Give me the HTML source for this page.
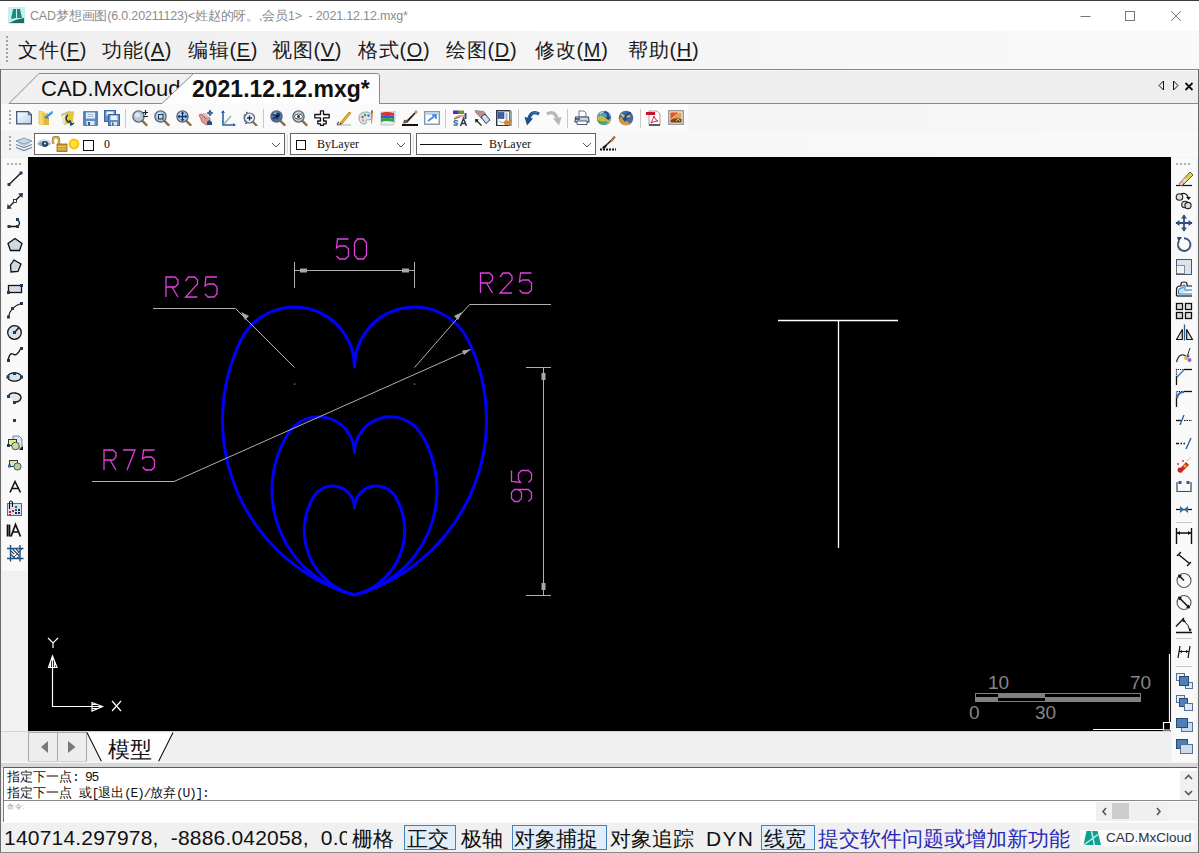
<!DOCTYPE html>
<html><head><meta charset="utf-8">
<style>
*{box-sizing:border-box;margin:0;padding:0}
html,body{width:1199px;height:853px;overflow:hidden;background:#f0f0f0;font-family:"Liberation Sans",sans-serif;position:relative}
.a{position:absolute}
#title{left:0;top:0;width:1199px;height:31px;background:#fff;border-top:1px solid #3a3a3a}
#title .t{left:30px;top:7px;font-size:12.5px;color:#8c8c8c;white-space:nowrap;letter-spacing:-0.17px}
#menu{left:0;top:31px;width:1199px;height:38px;background:linear-gradient(to right,#eeeeee,#f4f4f4 40%,#f9f9f9)}
#menu span{position:absolute;top:6px;font-size:20px;color:#1a1a1a;white-space:nowrap;letter-spacing:0.7px}
#menu u{text-decoration:underline;text-underline-offset:2px}
#tabs{left:0;top:69px;width:1199px;height:35px}
#tb1{left:1px;top:104px;width:1197px;height:27px;background:linear-gradient(to right,#f9f9f9 0,#fbfbfb 687px,#f5f5f5 687px,#f7f7f7)}
#tb2{left:1px;top:131px;width:1197px;height:26px;background:linear-gradient(to right,#f3f3f3,#f7f7f7 50%,#f9f9f9)}
#draw{left:28px;top:157px;width:1143px;height:574px;background:#000}
#ltb{left:1px;top:157px;width:27px;height:574px}
#rtb{left:1171px;top:157px;width:27px;height:606px}
#lborder{left:0;top:69px;width:1px;height:784px;background:#6a6a6a}
#rborder{left:1198px;top:69px;width:1px;height:784px;background:#6a6a6a}
#mtabs{left:1px;top:731px;width:1170px;height:32px}
#cmd{left:3px;top:767px;width:1193px;height:55px;background:#fff;border-left:1px solid #7a7a7a}
.cl{font-size:13px;color:#111;white-space:nowrap;line-height:15px}
.m{font-family:"Liberation Mono",monospace;font-size:13px;letter-spacing:-1.3px}
#status{left:1px;top:822px;width:1197px;height:31px;background:#f0f0f0}
.st{position:absolute;top:5px;font-size:21px;color:#111;white-space:nowrap;line-height:24px}
.box{position:absolute;top:3px;height:25px;background:#e1eefa;border:1px solid #3f84bd}
</style></head><body>
<div id="title" class="a">
 <svg class="a" style="left:8px;top:6px" width="17" height="17" viewBox="0 0 17 17"><rect x="0" y="0" width="17" height="17" fill="#c8f0ee"/><path d="M3 12 L5 2 L8 2 L8 11 Z M9 11 L9 2 L12 2 L14 11Z" fill="#1f8a80"/><path d="M1 16 Q8 12 16 11 L16 16Z" fill="#1b6e66"/></svg>
 <div class="a t">CAD梦想画图(6.0.20211123)&lt;姓赵的呀。,会员1&gt;&nbsp; - 2021.12.12.mxg*</div>
 <svg class="a" style="left:1075px;top:5px" width="115" height="20"><path d="M5.5 10.5h10" stroke="#777" stroke-width="1"/><rect x="50.5" y="5.5" width="9" height="9" fill="none" stroke="#777"/><path d="M96 5l10 10M106 5l-10 10" stroke="#777" stroke-width="1"/></svg>
</div>
<div id="menu" class="a">
 <div class="a" style="left:6px;top:5px;width:2px;height:27px;background:repeating-linear-gradient(#a4a4a4 0 2px,transparent 2px 4px)"></div>
 <span style="left:18px">文件(<u>F</u>)</span>
 <span style="left:102px">功能(<u>A</u>)</span>
 <span style="left:188px">编辑(<u>E</u>)</span>
 <span style="left:272px">视图(<u>V</u>)</span>
 <span style="left:358px">格式(<u>O</u>)</span>
 <span style="left:446px">绘图(<u>D</u>)</span>
 <span style="left:535px">修改(<u>M</u>)</span>
 <span style="left:628px">帮助(<u>H</u>)</span>
</div>
<div id="tabs" class="a">
 <svg class="a" style="left:0;top:0" width="1199" height="35" viewBox="0 69 1199 35">
  <rect x="0" y="69" width="1199" height="35" fill="#eeeeee"/>
  <path d="M0 69.5H1199" stroke="#8a8a8a"/>
  <path d="M0 70.5H1199" stroke="#f7f7f7"/>
  <path d="M9 103.5L39 73.5H196V103.5Z" fill="#f0f0f0" stroke="#8a8a8a"/>
  <path d="M9 103.5H1199" stroke="#8a8a8a"/>
  <path d="M1163.5 81V90L1159 85.5Z" fill="none" stroke="#111" stroke-width="1"/>
  <path d="M1173.5 81V90L1178 85.5Z" fill="none" stroke="#111" stroke-width="1"/>
  <path d="M1185.5 83L1192.5 90M1192.5 83L1185.5 90" stroke="#111" stroke-width="1.8"/>
 </svg>
 <div class="a" style="left:41px;top:7px;font-size:22px;color:#111;white-space:nowrap">CAD.MxCloud</div>
 <svg class="a" style="left:0;top:0" width="1199" height="35" viewBox="0 69 1199 35">
  <path d="M161.5 104L193.5 73.5H377Q379.5 73.5 379.5 76V103.5H1199" fill="#fdfdfd" stroke="#8a8a8a"/>
  <path d="M162.5 103.5H379" stroke="#fdfdfd"/>
 </svg>
 <div class="a" style="left:192px;top:7px;font-size:23px;font-weight:bold;color:#111;white-space:nowrap">2021.12.12.mxg*</div>
</div>
<div id="tb1" class="a">
<div class="a" style="left:8px;top:6px;width:2px;height:16px;background:repeating-linear-gradient(#a8a8a8 0 2px,transparent 2px 4px)"></div>
<svg class="a" style="left:15px;top:7px" width="16" height="16" viewBox="0 0 16 16"><defs><linearGradient id="gn" x1="0" y1="0" x2="1" y2="1"><stop offset="0" stop-color="#ffffff"/><stop offset="1" stop-color="#b5d3e8"/></linearGradient></defs><path d="M0.7 0.7H12.3L15.5 3.9V12.9H0.7Z" fill="url(#gn)" stroke="#3e5673" stroke-width="1.25"/><path d="M12.3 0.7V3.9H15.5" fill="none" stroke="#3e5673" stroke-width="0.9"/></svg>
<svg class="a" style="left:37px;top:6px" width="16" height="16" viewBox="0 0 16 16"><path d="M1 1L6 2V15L1 14Z" fill="#f7dc6a" stroke="#d9b440" stroke-width="0.6"/><path d="M4 3H10V15H5Z" fill="#efc94c"/><path d="M6 4L11 8V15H6Z" fill="#e4b73a"/><path d="M8 6L14 1L15 3L10 7L11 9L6 8Z" fill="#2f89d8"/><path d="M11 3L15 1" stroke="#7fd0f0" stroke-width="1"/></svg>
<svg class="a" style="left:59px;top:6px" width="16" height="16" viewBox="0 0 16 16"><path d="M1 4L9 1L14 2L12 13L4 15Z" fill="#b8b070" opacity="0.8"/><path d="M5 5L14 1L13 12L6 14Z" fill="#e8c63a"/><path d="M2 6L5 4L5 14L2 14Z" fill="#ece6c8"/><path d="M8 5Q4 8 8 12L10 11L11 15L14 13" fill="none" stroke="#1a2a3a" stroke-width="1.4"/><path d="M10 11L13 14L10 15Z" fill="#1e4f7a"/></svg>
<svg class="a" style="left:82px;top:7px" width="16" height="16" viewBox="0 0 16 16"><rect x="0.75" y="0.75" width="13.5" height="13.5" fill="#5f8fc6" stroke="#3a6699" stroke-width="1"/><rect x="3" y="1.5" width="9" height="6" fill="#e8f2fb"/><path d="M4.5 3.5H10.5M4.5 5.5H10.5" stroke="#8aa8c8" stroke-width="0.8"/><rect x="3.5" y="10" width="8" height="4" fill="#dfe9f3"/><rect x="5" y="11" width="2" height="3" fill="#2f5a8f"/></svg>
<svg class="a" style="left:103px;top:6px" width="16" height="16" viewBox="0 0 16 16"><rect x="0.5" y="0.5" width="11" height="11" fill="#5f8fc6" stroke="#3a6699" stroke-width="1"/><rect x="2.5" y="1.5" width="7" height="4" fill="#e8f2fb"/><rect x="4.5" y="4.5" width="11" height="11" fill="#5f8fc6" stroke="#3a6699" stroke-width="1"/><rect x="6.5" y="5.5" width="7" height="4.5" fill="#e8f2fb"/><rect x="7" y="12" width="6" height="3.5" fill="#dfe9f3"/><rect x="8" y="12.5" width="1.5" height="3" fill="#2f5a8f"/></svg>
<svg class="a" style="left:131px;top:6px" width="16" height="16" viewBox="0 0 16 16"><defs></defs><path d="M9.5 10L14.5 15" stroke="#8a6a40" stroke-width="2.4" stroke-linecap="round"/><circle cx="6.5" cy="6.5" r="5.6" fill="#b9c8d6" stroke="#55657a" stroke-width="1.3"/><circle cx="5.5" cy="5" r="2.5" fill="#e6eef5" opacity="0.8"/><path d="M11 2.5H16M13.5 0V5M11 6.5H16" stroke="#222" stroke-width="1.1"/></svg>
<svg class="a" style="left:153px;top:6px" width="16" height="16" viewBox="0 0 16 16"><defs></defs><path d="M9.5 10L14.5 15" stroke="#8a6a40" stroke-width="2.4" stroke-linecap="round"/><circle cx="6.5" cy="6.5" r="5.6" fill="#b9c8d6" stroke="#55657a" stroke-width="1.3"/><circle cx="5.5" cy="5" r="2.5" fill="#e6eef5" opacity="0.8"/><rect x="4.5" y="4.5" width="4.5" height="4.5" fill="none" stroke="#1d3f6e" stroke-width="1.1"/></svg>
<svg class="a" style="left:175px;top:6px" width="16" height="16" viewBox="0 0 16 16"><defs></defs><path d="M9.5 10L14.5 15" stroke="#8a6a40" stroke-width="2.4" stroke-linecap="round"/><circle cx="6.5" cy="6.5" r="5.6" fill="#b9c8d6" stroke="#55657a" stroke-width="1.3"/><circle cx="5.5" cy="5" r="2.5" fill="#e6eef5" opacity="0.8"/><path d="M6.5 2.5V10.5M2.5 6.5H10.5" stroke="#0f3a78" stroke-width="1.4"/><path d="M6.5 1.5L8.5 3.8H4.5ZM6.5 11.5L8.5 9.2H4.5ZM1.5 6.5L3.8 4.5V8.5ZM11.5 6.5L9.2 4.5V8.5Z" fill="#0f3a78"/></svg>
<svg class="a" style="left:197px;top:6px" width="16" height="16" viewBox="0 0 16 16"><path d="M1 5Q3 3 5 5L9 9Q10 6 12 8L12 13L8 15L4 12Z" fill="#d79a9a" stroke="#b46a6a" stroke-width="0.8"/><path d="M3 4L8 9M5 3L9 8M7 3L10 7" stroke="#b46a6a" stroke-width="0.7"/><path d="M11 10L14 12V15H9V12Z" fill="#1f4f85"/><path d="M12 0V6M9 3H15" stroke="#1f4f85" stroke-width="1.2"/><path d="M12 0L10.5 1.8H13.5ZM9 3L10.8 1.5V4.5ZM15 3L13.2 1.5V4.5ZM12 6L10.5 4.2H13.5Z" fill="#1f4f85"/></svg>
<svg class="a" style="left:219px;top:6px" width="16" height="16" viewBox="0 0 16 16"><path d="M3 1V15H15" fill="none" stroke="#2a62a8" stroke-width="1.6"/><path d="M3 0L1 3H5ZM16 15L13 13V17Z" fill="#2a62a8"/><path d="M4 14L11 6" stroke="#9aa9b8" stroke-width="1.3"/></svg>
<svg class="a" style="left:241px;top:6px" width="16" height="16" viewBox="0 0 16 16"><path d="M10 11L14.5 15.5" stroke="#8a6a40" stroke-width="2.2" stroke-linecap="round"/><circle cx="7.5" cy="8" r="5" fill="#e7eef6" stroke="#55657a" stroke-width="1.2"/><path d="M7.5 5.5V10.5M5 8H10" stroke="#1d3050" stroke-width="1.3"/><path d="M2.5 4Q1 8 3 12" fill="none" stroke="#6a7a8a" stroke-width="1"/><path d="M4 1.5L6 2.5L4 4Z M3.5 12L5.5 14L3 14Z" fill="#556"/></svg>
<svg class="a" style="left:269px;top:6px" width="16" height="16" viewBox="0 0 16 16"><defs></defs><path d="M9.5 10L14.5 15" stroke="#8a6a40" stroke-width="2.4" stroke-linecap="round"/><circle cx="6.5" cy="6.5" r="5.6" fill="#4d6f9a" stroke="#55657a" stroke-width="1.3"/><circle cx="5.5" cy="5" r="2.5" fill="#e6eef5" opacity="0.8"/><path d="M3 4L8 9M3 9L7 4H9V7" stroke="#1d3f6e" stroke-width="2"/></svg>
<svg class="a" style="left:291px;top:6px" width="16" height="16" viewBox="0 0 16 16"><defs></defs><path d="M9.5 10L14.5 15" stroke="#8a6a40" stroke-width="2.4" stroke-linecap="round"/><circle cx="6.5" cy="6.5" r="5.6" fill="#c5ccd4" stroke="#55657a" stroke-width="1.3"/><circle cx="5.5" cy="5" r="2.5" fill="#e6eef5" opacity="0.8"/><ellipse cx="6.5" cy="6.5" rx="4" ry="2.5" fill="#fff" stroke="#333" stroke-width="0.8"/><circle cx="6.5" cy="6.5" r="1.5" fill="#333"/></svg>
<svg class="a" style="left:313px;top:6px" width="16" height="16" viewBox="0 0 16 16"><path d="M6.5 0.8H9.5V4.5H15.2V7.8H9.5V11H12.2V13.8H9.5V15.5H6.5V13.8H3.8V11H6.5V7.8H0.8V4.5H6.5Z" fill="#fff" stroke="#111" stroke-width="1.3" stroke-linejoin="round"/></svg>
<svg class="a" style="left:335px;top:6px" width="16" height="16" viewBox="0 0 16 16"><path d="M1 14Q0 16 3 15L15 15" fill="none" stroke="#9a9a9a" stroke-width="0.8"/><path d="M2 15Q1 12 3 12" fill="none" stroke="#222" stroke-width="1"/><path d="M4 13L13 2L15 3L6 14Z" fill="#e8b52a" stroke="#a67710" stroke-width="0.7"/><path d="M4 13L6 14L3 15Z" fill="#333"/></svg>
<svg class="a" style="left:357px;top:6px" width="16" height="16" viewBox="0 0 16 16"><path d="M8 2Q1 2 1 8Q1 14 7 14Q9 14 8 11Q8 9 11 10Q14 10 14 7Q14 2 8 2Z" fill="#d8e6f2" stroke="#7a8fa6" stroke-width="0.8"/><circle cx="4.5" cy="7" r="1.2" fill="#e04040"/><circle cx="7" cy="5" r="1.2" fill="#3aa03a"/><circle cx="10.5" cy="5.5" r="1.2" fill="#3a6ad0"/><circle cx="5" cy="10.5" r="1.2" fill="#e0b020"/><path d="M13 1L14 0L15 1L14 13L13 14Z" fill="#e09030"/><path d="M13.3 0.5H14.7V3H13.3Z" fill="#8a5a2a"/></svg>
<svg class="a" style="left:379px;top:6px" width="16" height="16" viewBox="0 0 16 16"><path d="M1 2H13L15 1V12L13 15H1Z" fill="#ececec" stroke="#9aa" stroke-width="0.6"/><path d="M1 3Q6 1 14 3V6Q6 4 1 6Z" fill="#e03030"/><path d="M1 6Q6 4 14 6V9Q6 7 1 9Z" fill="#3060d0"/><path d="M1 9Q6 7 14 9V12Q6 10 1 12Z" fill="#30a040"/></svg>
<svg class="a" style="left:401px;top:6px" width="16" height="16" viewBox="0 0 16 16"><path d="M0 15H16" stroke="#111" stroke-width="2"/><path d="M3 12L14 1L15 2L5 13Z" fill="#222"/><path d="M2 10Q4 9 6 11L4 13Q2 14 1 13Z" fill="#7a5a3a"/><path d="M12 2L14 0L16 2L14 4Z" fill="#c9a070"/></svg>
<svg class="a" style="left:423px;top:6px" width="16" height="16" viewBox="0 0 16 16"><rect x="0.75" y="1.75" width="14.5" height="12.5" fill="#fff" stroke="#7e8da0" stroke-width="1.3"/><rect x="1.5" y="2.5" width="13" height="2.5" fill="#c6d6e6"/><path d="M4 11L12 5M8 5H12V9" fill="none" stroke="#3a8ad8" stroke-width="1.6"/></svg>
<svg class="a" style="left:451px;top:6px" width="16" height="16" viewBox="0 0 16 16"><defs><linearGradient id="rb"><stop offset="0" stop-color="#e0008a"/><stop offset=".3" stop-color="#3a20d0"/><stop offset=".6" stop-color="#20c020"/><stop offset="1" stop-color="#f05020"/></linearGradient></defs><rect x="1" y="0.5" width="11" height="3.5" fill="url(#rb)"/><path d="M2 8Q6 4 12 5L12 7Q7 6 3 10Z" fill="#e0a0a0"/><path d="M2 9Q5 8 8 7" stroke="#6a8a4a" stroke-width="1.2" fill="none"/><rect x="12.5" y="3" width="2" height="6" fill="#3a4a6a"/><path d="M6 11Q2 10 2 12Q2 13 4 13Q6 13.5 5 15H1.5" fill="none" stroke="#4a6aa0" stroke-width="1.3"/><path d="M8.5 16L11.5 8.5L14.5 16M9.5 13.5H13.5" fill="none" stroke="#2a3a5a" stroke-width="1.5"/></svg>
<svg class="a" style="left:473px;top:6px" width="16" height="16" viewBox="0 0 16 16"><path d="M1 0.5L10 1.5L13 6L8 9L2 3Z" fill="#b89088" stroke="#8a6a60" stroke-width="0.6"/><path d="M7 7L11 4L16 10L12 13.5Z" fill="#d0e2f0" stroke="#2a3a5a" stroke-width="1"/><path d="M7.5 15.5L1.5 9.5" stroke="#222" stroke-width="1.2"/><path d="M1 9L5 9.5L1.5 13Z" fill="#222"/></svg>
<svg class="a" style="left:495px;top:6px" width="16" height="16" viewBox="0 0 16 16"><rect x="0.75" y="0.75" width="13" height="15" fill="#fff" stroke="#2a2f3a" stroke-width="1.4"/><rect x="2" y="2.5" width="6" height="6" fill="#3a62a8" stroke="#24407a" stroke-width="0.6"/><rect x="9.5" y="2.5" width="2" height="9" fill="#a8b4c0"/><rect x="13.5" y="1" width="2.5" height="15" fill="#9aa2aa"/><path d="M7 12Q10 9 13 11L16 8.5L16 11L14 13Q13 15.5 9 15Z" fill="#d8862a"/><path d="M3 11L7 13" stroke="#888" stroke-width="0.8"/></svg>
<svg class="a" style="left:523px;top:6px" width="16" height="16" viewBox="0 0 16 16"><path d="M15 4Q8 0 5 8" fill="none" stroke="#1e4f8e" stroke-width="3.2"/><path d="M0.5 7L9 8.5L3 15.5Z" fill="#1e4f8e"/><path d="M14 3Q9 1.5 7 5" fill="none" stroke="#5a8ad0" stroke-width="0.8"/></svg>
<svg class="a" style="left:545px;top:6px" width="16" height="16" viewBox="0 0 16 16"><path d="M1 4Q8 0 11 8" fill="none" stroke="#b4b8bd" stroke-width="3.2"/><path d="M15.5 7L7 8.5L13 15.5Z" fill="#b4b8bd"/></svg>
<svg class="a" style="left:573px;top:6px" width="16" height="16" viewBox="0 0 16 16"><path d="M5 1H10L12 3V7H5Z" fill="#fff" stroke="#556" stroke-width="0.8"/><path d="M1.5 7H14.5L15 12H1Z" fill="#c8d4e2" stroke="#3a4a6a" stroke-width="1.1"/><path d="M3 11H13V14.5H3Z" fill="#fff" stroke="#3a4a6a" stroke-width="0.9"/><path d="M1.5 9H6" stroke="#1a3a6a" stroke-width="1.4"/></svg>
<svg class="a" style="left:595px;top:6px" width="16" height="16" viewBox="0 0 16 16"><circle cx="8" cy="8" r="7.3" fill="#5a9ab8"/><path d="M1 8Q4 4 8 7T15 9L13 13Q8 15 3 12Z" fill="#c8b848"/><path d="M2 11Q6 14 11 12" stroke="#4aa04a" stroke-width="2" fill="none"/><path d="M4 4Q6 1 10 2" stroke="#e8e0a0" stroke-width="1.2" fill="none"/><path d="M8 2Q13 2 12 8" fill="none" stroke="#1e4f8e" stroke-width="2.2"/><path d="M9 7L12.5 10.5L15 6.5Z" fill="#1e4f8e"/></svg>
<svg class="a" style="left:617px;top:6px" width="16" height="16" viewBox="0 0 16 16"><circle cx="8" cy="8" r="7.3" fill="#4a6a98"/><path d="M1 9Q4 5 7 9T13 14L8 15.5Q3 14 1 11Z" fill="#d89838"/><path d="M3 4Q6 8 12 6" stroke="#e8d070" stroke-width="1.4" fill="none"/><path d="M13 3Q7 3 7 10" fill="none" stroke="#1e4f8e" stroke-width="2.2"/><path d="M4 8L7 12L10 8Z" fill="#1e4f8e"/></svg>
<svg class="a" style="left:645px;top:6px" width="16" height="16" viewBox="0 0 16 16"><path d="M3 1H11L14 4V15H3Z" fill="#fff" stroke="#888" stroke-width="0.8"/><path d="M3 15H14" stroke="#111" stroke-width="1.2"/><rect x="0" y="2" width="9" height="3" fill="#c8102e"/><path d="M5 13Q7 9 8 6Q9 10 12 11Q8 11 5 13Z" fill="none" stroke="#c8102e" stroke-width="0.9"/></svg>
<svg class="a" style="left:667px;top:6px" width="16" height="16" viewBox="0 0 16 16"><rect x="0.75" y="0.75" width="14.5" height="13.5" fill="#f4f4f4" stroke="#8a949e" stroke-width="1.3"/><rect x="2.5" y="2.5" width="11" height="10" fill="#e8a050"/><path d="M2.5 2.5H10Q5 6 2.5 9Z" fill="#e05030"/><path d="M2.5 10Q7 7 13.5 9V12.5H2.5Z" fill="#6a4a2a"/><path d="M8 11L10 9L12 11" stroke="#f0e0a0" stroke-width="0.8" fill="none"/></svg>
<div class="a" style="left:124px;top:5px;width:1px;height:19px;background:#c8c8c8"></div>
<div class="a" style="left:262px;top:5px;width:1px;height:19px;background:#c8c8c8"></div>
<div class="a" style="left:444px;top:5px;width:1px;height:19px;background:#c8c8c8"></div>
<div class="a" style="left:517px;top:5px;width:1px;height:19px;background:#c8c8c8"></div>
<div class="a" style="left:566px;top:5px;width:1px;height:19px;background:#c8c8c8"></div>
<div class="a" style="left:639px;top:5px;width:1px;height:19px;background:#c8c8c8"></div>
</div>
<div id="tb2" class="a">
<div class="a" style="left:8px;top:5px;width:2px;height:16px;background:repeating-linear-gradient(#a8a8a8 0 2px,transparent 2px 4px)"></div>
<svg class="a" style="left:14px;top:6px" width="18" height="15" viewBox="0 0 18 15"><path d="M1 4L9 1L17 4L9 7Z" fill="#c4d8ec" stroke="#6f89a8" stroke-width="0.8"/><path d="M1 7.5L9 10.5L17 7.5" fill="none" stroke="#6f89a8" stroke-width="1.2"/><path d="M1 10.5L9 13.5L17 10.5" fill="none" stroke="#6f89a8" stroke-width="1.2"/><path d="M3 5.5L9 8.5L15 5.5" fill="none" stroke="#9fb6cf" stroke-width="1"/></svg>
<div class="a" style="left:33px;top:2px;width:251px;height:22px;background:#fff;border:1px solid #646464"></div>
<svg class="a" style="left:36px;top:8px" width="14" height="10" viewBox="0 0 14 10"><path d="M0 5Q7 -2 14 5Q7 10 0 5Z" fill="#8aa2bc"/><path d="M0 3Q7 -1 14 3" stroke="#d0dce8" stroke-width="1.5" fill="none"/><circle cx="8" cy="5" r="3" fill="#2a3f5a"/><circle cx="8" cy="4.5" r="1" fill="#fff"/></svg>
<svg class="a" style="left:50px;top:5px" width="17" height="16" viewBox="0 0 17 16"><path d="M2 8V4Q2 1 5 1Q8 1 8 4V8" fill="none" stroke="#9a7a20" stroke-width="2.4"/><path d="M2 8V4Q2 1 5 1Q8 1 8 4V8" fill="none" stroke="#e8cf60" stroke-width="1"/><rect x="6" y="8" width="10" height="7.5" fill="#c89a28" stroke="#8a6a10" stroke-width="0.8"/><path d="M6.5 10.5H15.5M6.5 13H15.5" stroke="#f0d070" stroke-width="0.9"/></svg>
<svg class="a" style="left:67px;top:7px" width="12" height="12" viewBox="0 0 12 12"><circle cx="6" cy="6" r="5.4" fill="#f8c400"/><circle cx="6" cy="6" r="3.4" fill="#ffe040"/></svg>
<div class="a" style="left:82px;top:9px;width:11px;height:11px;border:1px solid #111;background:#fff"></div>
<div class="a" style="left:103px;top:6px;font-family:'Liberation Serif',serif;font-size:12px;color:#111">0</div>
<svg class="a" style="left:270px;top:11px" width="10" height="6" viewBox="0 0 10 6"><path d="M1 1L5 5L9 1" fill="none" stroke="#555" stroke-width="1"/></svg>
<div class="a" style="left:286px;top:4px;width:2px;height:18px;background:#d8d8d8;border-right:1px solid #fff"></div>
<div class="a" style="left:289px;top:2px;width:121px;height:22px;background:#fff;border:1px solid #646464"></div>
<div class="a" style="left:295px;top:9px;width:10px;height:10px;border:1px solid #111;background:#fff"></div>
<div class="a" style="left:316px;top:6px;font-family:'Liberation Serif',serif;font-size:12px;color:#111">ByLayer</div>
<svg class="a" style="left:395px;top:11px" width="10" height="6" viewBox="0 0 10 6"><path d="M1 1L5 5L9 1" fill="none" stroke="#555" stroke-width="1"/></svg>
<div class="a" style="left:412px;top:4px;width:2px;height:18px;background:#d8d8d8;border-right:1px solid #fff"></div>
<div class="a" style="left:415px;top:2px;width:180px;height:22px;background:#fff;border:1px solid #646464"></div>
<div class="a" style="left:419px;top:13px;width:62px;height:1px;background:#111"></div>
<div class="a" style="left:488px;top:6px;font-family:'Liberation Serif',serif;font-size:12px;color:#111">ByLayer</div>
<svg class="a" style="left:581px;top:11px" width="10" height="6" viewBox="0 0 10 6"><path d="M1 1L5 5L9 1" fill="none" stroke="#555" stroke-width="1"/></svg>
<svg class="a" style="left:598px;top:5px" width="18" height="15" viewBox="0 0 18 15"><path d="M1 13.5H17" stroke="#111" stroke-width="2" stroke-dasharray="2 1"/><path d="M4 12L15 2" stroke="#222" stroke-width="1.6"/><path d="M12 5L16 0.5" stroke="#a87040" stroke-width="2.2"/><path d="M3 12.5Q5 8 8 9.5L6 12.5Z" fill="#111"/></svg>
</div>
<div id="ltb" class="a">
<svg class="a" style="left:-1px;top:0" width="28" height="574" viewBox="0 157 28 574">
<rect x="0" y="157" width="28" height="574" fill="#f1f1f1"/>
<rect x="2" y="158" width="25" height="413" fill="#f9f9f9"/>
<g fill="#b0b0b0"><rect x="7" y="163" width="2" height="2"/><rect x="11" y="163" width="2" height="2"/><rect x="15" y="163" width="2" height="2"/><rect x="19" y="163" width="2" height="2"/></g>
<g stroke="#111" stroke-width="1.3" fill="none">
<path d="M9 184.5L21 173"/>
<path d="M8 208L22 194"/>
<path d="M9 226.5H17.5M17.5 219.5Q21.5 223 17.5 226.5"/>
<path d="M15 238.5L22 243.5L19.5 250.5H10.5L8 243.5Z" fill="#cdd9e5"/>
<path d="M14 260L21 264L18 271.5L11 272L10.5 265Z" fill="#cdd9e5"/>
<rect x="8.5" y="285.5" width="13" height="7" fill="#d5dde6"/>
<path d="M8.5 317Q10 307 21 303.5"/>
<circle cx="14.5" cy="332.5" r="6.8" fill="#d8e2ec"/><path d="M14.5 332.5L19 327.5"/>
<path d="M8 360Q10 352 13 354Q17 357 21 348"/>
<ellipse cx="14.5" cy="377" rx="6.8" ry="4.2" fill="#d8e2ec"/>
<path d="M8.5 396Q10 392.5 15 393Q21.5 394 21 398Q20 402 15 402" fill="#dde5ee"/>
<path d="M10 492.5L15 481.5L20.5 492.5M11.8 488.5H18.5" stroke-width="1.6"/>
<path d="M7.5 536.5V524.5M9.5 536.5V524.5M11 536.5L15.5 524.5L20.5 536.5M12.8 532H18.3" stroke-width="1.7"/>
</g>
<g fill="#1d3c5c">
<rect x="7.5" y="183" width="3" height="3"/><rect x="19.5" y="171.5" width="3" height="3"/>
<path d="M7 209L7.5 204L12 208.5Z M23 193L22.5 198L18 193.5Z"/>
<rect x="7.5" y="225" width="3" height="3"/><rect x="16" y="225" width="3" height="3"/><rect x="16" y="218" width="3" height="3"/>
<rect x="7" y="291" width="3" height="3"/><rect x="20" y="284" width="3" height="3"/>
<rect x="7" y="315.5" width="3" height="3"/><rect x="11" y="307" width="3" height="3"/><rect x="20" y="302" width="3" height="3"/>
<rect x="13" y="331" width="3" height="3"/>
<rect x="7" y="359" width="3" height="3"/><rect x="20" y="347" width="3" height="3"/>
<rect x="13" y="372" width="3" height="3"/><rect x="6.5" y="375.5" width="3" height="3"/><rect x="20" y="375.5" width="3" height="3"/>
<rect x="7" y="395" width="3" height="3"/><rect x="13" y="401" width="3" height="3"/>
<rect x="13" y="419" width="3" height="3"/>
</g>
<path d="M14 208.5L22 201.5L21 197L14 204" fill="none"/>
<rect x="13.5" y="199.5" width="3" height="3" fill="#fff" stroke="#111" stroke-width="0.8"/>
<!-- block -->
<path d="M13 436H19L22 439V448H13Z" fill="#dbe6f0" stroke="#5a6a7a" stroke-width="0.8"/>
<rect x="8.5" y="439.5" width="8" height="6" fill="#e8e890" stroke="#1d3c5c" stroke-width="1"/>
<circle cx="15.5" cy="446" r="3.8" fill="#c8d8a8" stroke="#3a4a3a" stroke-width="0.9"/>
<rect x="7" y="444" width="3" height="3" fill="#1d3c5c"/>
<path d="M23 446V450H19Z" fill="#111"/>
<rect x="9.5" y="460.5" width="8" height="6" fill="#e8e890" stroke="#1d3c5c" stroke-width="1"/>
<circle cx="17.5" cy="466.5" r="3.6" fill="#b8cca0" stroke="#3a4a3a" stroke-width="0.9"/>
<rect x="8" y="464.5" width="3" height="3" fill="#2f6ab0"/>
<!-- table -->
<rect x="7.5" y="503.5" width="14" height="12" fill="#d8e0f0" stroke="#5a6a8a" stroke-width="1"/>
<g fill="#c02030"><rect x="9" y="511" width="2" height="2"/><rect x="12" y="510" width="2" height="2"/><rect x="9" y="514" width="2" height="1.5"/></g>
<g fill="#1a7a3a"><rect x="15" y="506" width="2" height="2"/><rect x="15" y="509" width="2" height="2"/></g>
<g fill="#1a2a6a"><rect x="18" y="509" width="2" height="2"/><rect x="18" y="512" width="2" height="2"/><rect x="15" y="512" width="2" height="2"/></g>
<path d="M9.5 509V503Q9.5 501 11 501Q12.5 501 12.5 503V507" fill="none" stroke="#111" stroke-width="1.1"/>
<!-- hatch -->
<rect x="10.5" y="548" width="9.5" height="10.5" fill="#fff"/>
<path d="M11 551L14 554M11 554.5L15 558.5M12.5 549L19.5 556M16 549L19.5 552.5M17 558.5L19.5 556" stroke="#444" stroke-width="1.1"/>
<path d="M7 548.5H23.5M7 558.5H23.5M10.5 545V561.5M20 545V561.5" stroke="#1d4f8a" stroke-width="1.4"/>
<path d="M13 558L22 549" stroke="#1d4f8a" stroke-width="1"/>
</svg>
</div>
<div id="rtb" class="a">
<svg class="a" style="left:0;top:0" width="27" height="606" viewBox="1171 157 27 606">
<rect x="1171" y="157" width="27" height="606" fill="#f3f3f3"/>
<rect x="1172" y="158" width="24" height="604" fill="#f9f9f9"/>
<g fill="#b0b0b0"><rect x="1176" y="163" width="2" height="2"/><rect x="1180" y="163" width="2" height="2"/><rect x="1184" y="163" width="2" height="2"/><rect x="1188" y="163" width="2" height="2"/></g>
<!-- eraser -->
<path d="M1176 185.5H1192" stroke="#111" stroke-width="1.2"/>
<path d="M1179 184L1190 172L1193 175L1182 186Z" fill="#e8d040" stroke="#333" stroke-width="0.8"/>
<path d="M1179 184L1182 181L1184 183L1181 186Z" fill="#f0c0c0" stroke="#a06060" stroke-width="0.6"/>
<path d="M1182 181L1185 178L1187 180L1184 183Z" fill="#cfe0f0"/>
<!-- copy -->
<circle cx="1179.5" cy="197" r="3.3" fill="#d8dde2" stroke="#222" stroke-width="1.1"/>
<circle cx="1185" cy="204.5" r="3.3" fill="#d8dde2" stroke="#222" stroke-width="1.1"/>
<circle cx="1188" cy="205.5" r="3.1" fill="#d8dde2" stroke="#222" stroke-width="1.1"/>
<path d="M1181 194Q1186 192 1188 197" fill="none" stroke="#111" stroke-width="1.2"/>
<path d="M1186 197H1191L1188.5 200Z" fill="#111"/>
<!-- move -->
<path d="M1184 215V231M1176 223H1192" stroke="#2d4f78" stroke-width="1.8"/>
<path d="M1184 214.5L1181 218.5H1187ZM1184 231.5L1181 227.5H1187ZM1175.5 223L1179.5 220V226ZM1192.5 223L1188.5 220V226Z" fill="#2d4f78"/>
<!-- rotate -->
<path d="M1179 241A6.3 6.3 0 1 0 1184 238.3" fill="none" stroke="#3a5a80" stroke-width="1.9"/>
<path d="M1177 237L1182 237L1178.5 242Z" fill="#2d4f78"/>
<!-- scale -->
<rect x="1176.5" y="259.5" width="15" height="15" fill="#d7e4f0" stroke="#556" stroke-width="1"/>
<rect x="1176.5" y="265.5" width="8" height="8" fill="#eef3f8" stroke="#333" stroke-width="1" stroke-dasharray="1 1"/>
<!-- offset -->
<path d="M1176.5 296V290Q1176.5 286 1180 286H1181V284Q1181 282 1184 282Q1187 282 1187 284V286H1192" fill="none" stroke="#111" stroke-width="1.2"/>
<path d="M1178.5 294V291Q1178.5 288 1181 288H1183V285H1185V288V290H1192M1178.5 294H1192" fill="#c8e4f8" stroke="#2a7ac0" stroke-width="1"/>
<path d="M1176.5 296H1192" stroke="#111" stroke-width="1.2"/>
<!-- array -->
<g fill="#d8dee4" stroke="#111" stroke-width="1.3"><rect x="1176.5" y="303.5" width="6" height="6"/><rect x="1185.5" y="303.5" width="6" height="6"/><rect x="1176.5" y="312.5" width="6" height="6"/><rect x="1185.5" y="312.5" width="6" height="6"/></g>
<!-- mirror -->
<path d="M1184.5 324.5V340.5" stroke="#2a5a90" stroke-width="1.3"/>
<path d="M1182.3 329.5L1176.5 339.5H1182.3Z M1186.7 329.5L1192.5 339.5H1186.7Z" fill="#dfe6ee" stroke="#111" stroke-width="1.2" stroke-linejoin="round"/>
<!-- trim -->
<path d="M1176.5 362Q1179 352 1186 356" fill="none" stroke="#333" stroke-width="1.3"/>
<path d="M1190 348L1186 360" stroke="#333" stroke-width="1"/>
<circle cx="1186" cy="358" r="2" fill="#e8c020"/><circle cx="1189.5" cy="360" r="2" fill="#b050d0"/><circle cx="1188" cy="356" r="1.5" fill="#3a6ad0"/>
<!-- chamfer -->
<path d="M1176.5 385V377" stroke="#111" stroke-width="1.3"/><path d="M1176.5 377V369.5H1184" fill="none" stroke="#111" stroke-width="1.2" stroke-dasharray="1.2 1"/><path d="M1184 369.5H1192" stroke="#111" stroke-width="1.3"/>
<path d="M1177 377L1184 370" stroke="#3a7ac8" stroke-width="1.4"/>
<!-- fillet -->
<path d="M1176.5 407V398" stroke="#111" stroke-width="1.3"/><path d="M1176.5 398V391.5H1184" fill="none" stroke="#111" stroke-width="1.2" stroke-dasharray="1.2 1"/><path d="M1184 391.5H1192" stroke="#111" stroke-width="1.3"/>
<path d="M1177 398Q1178 392 1184 392" fill="none" stroke="#2a6ac0" stroke-width="2"/>
<!-- break -->
<path d="M1176 420.5H1181" stroke="#111" stroke-width="1.3"/><path d="M1184 420.5H1192" stroke="#111" stroke-width="1.2" stroke-dasharray="1.5 1"/><path d="M1180 425L1184 415" stroke="#2a5a90" stroke-width="1.3"/>
<path d="M1176 443.5H1179M1180.5 443.5H1182M1183.5 443.5H1185" stroke="#111" stroke-width="1.3"/><path d="M1186 449L1191 438" stroke="#2a5a90" stroke-width="1.3"/>
<!-- explode -->
<path d="M1178 471L1186 462L1189 465L1181 473Z" fill="#c03020"/><circle cx="1180" cy="470" r="2.5" fill="#d02020"/><circle cx="1185" cy="466" r="1.5" fill="#e8b020"/><circle cx="1178" cy="464" r="1" fill="#d04020"/><circle cx="1183" cy="461" r="1" fill="#d04020"/>
<path d="M1187 461L1191 457" stroke="#888" stroke-width="1" stroke-dasharray="1 1"/>
<!-- stretch bracket -->
<path d="M1177 482V491.5H1191V482" fill="none" stroke="#3a4a5a" stroke-width="1.2"/><rect x="1178.5" y="481" width="3" height="3" fill="#2a5a90"/><rect x="1186.5" y="481" width="3" height="3" fill="#2a5a90"/>
<!-- join -->
<path d="M1176 509.5H1192" stroke="#111" stroke-width="1.3"/><path d="M1180 506L1184 509.5L1180 513ZM1188 506L1184 509.5L1188 513Z" fill="#3a6a98"/>
<path d="M1176 522.5H1192" stroke="#c8c8c8" stroke-width="1"/>
<!-- dim linear -->
<path d="M1176.5 528V544M1191.5 528V544M1177 533H1191" stroke="#111" stroke-width="1.4"/><path d="M1177 533L1180 531V535ZM1191 533L1188 531V535Z" fill="#111"/>
<!-- aligned -->
<path d="M1177 556L1181 552M1187 566L1191 562M1178.5 554.5L1189.5 563.5" stroke="#111" stroke-width="1.4"/>
<!-- radius -->
<circle cx="1184" cy="580.5" r="7" fill="none" stroke="#555" stroke-width="1.1"/><path d="M1184 580.5L1179 575.5" stroke="#111" stroke-width="1.5"/><path d="M1178 574.5L1182 575.5L1179 578.5Z" fill="#111"/>
<!-- diameter -->
<circle cx="1184" cy="602.5" r="7" fill="none" stroke="#555" stroke-width="1.1"/><path d="M1179 597.5L1189 607.5" stroke="#111" stroke-width="1.5"/><path d="M1178 596.5L1182 597.5L1179 600.5ZM1190 608.5L1186 607.5L1189 604.5Z" fill="#111"/>
<!-- angular -->
<path d="M1176 632.5H1192M1176 626.5L1184 618" stroke="#111" stroke-width="1.3"/><path d="M1184 621Q1189 625 1190 631" fill="none" stroke="#111" stroke-width="1"/><path d="M1183 618.5L1186 621.5L1182.5 622Z M1190 632L1188.5 628.5L1191.5 629Z" fill="#111"/>
<path d="M1176 638.5H1192" stroke="#c8c8c8" stroke-width="1"/>
<!-- dim continue -->
<path d="M1178 658L1180 646M1188 658L1190 646M1179 651.5H1189" stroke="#111" stroke-width="1.2"/><path d="M1179 651.5L1182 650V653ZM1189 651.5L1186 650V653Z" fill="#111"/>
<path d="M1176 666.5H1192" stroke="#c8c8c8" stroke-width="1"/>
<!-- layer icons -->
<g stroke-width="1">
<rect x="1176.5" y="673.5" width="8" height="7" fill="#e4eef8" stroke="#5a7090"/><rect x="1185.5" y="682.5" width="7" height="6" fill="#dde8f2" stroke="#5a7090"/><rect x="1179.5" y="676.5" width="9" height="9" fill="#4f7fb8" stroke="#2a4a70"/>
<rect x="1176.5" y="695.5" width="8" height="7" fill="#e4eef8" stroke="#5a7090"/><rect x="1179.5" y="698.5" width="8" height="8" fill="#4f7fb8" stroke="#2a4a70"/><rect x="1184.5" y="703.5" width="8" height="7" fill="#dde8f2" stroke="#5a7090"/>
<rect x="1181.5" y="722.5" width="11" height="9" fill="#c8dcee" stroke="#5a7090"/><rect x="1176.5" y="718.5" width="11" height="9" fill="#4f7fb8" stroke="#2a4a70"/>
<rect x="1176.5" y="739.5" width="11" height="9" fill="#4f7fb8" stroke="#2a4a70"/><rect x="1180.5" y="744.5" width="12" height="9" fill="#c8dcee" stroke="#5a7090"/>
</g>
</svg>
</div>
<svg class="a" style="left:28px;top:157px" width="1143" height="574" viewBox="28 157 1143 574">
<defs>
<path id="gR" d="M0 20V0H9L12 3V7L9 10H0M6 10L12 20"/>
<path id="g2" d="M0 4L3 0H9L12 3V7L0 20H12"/>
<path id="g5" d="M12 0H1L0 9L3 7H9L12 10V17L9 20H3L0 17"/>
<path id="g0" d="M3 0H9L12 4V16L9 20H3L0 16V4Z"/>
<path id="g7" d="M0 0H12L4 20"/>
<path id="g9" d="M12 7L9 10H3L0 7V3L3 0H9L12 3V17L9 20H3L0 17"/>
</defs>
<rect x="28" y="157" width="1143" height="574" fill="#000"/>
<g fill="none" stroke="#0000ff" stroke-width="3" stroke-linejoin="round">
<path d="M354.5 595A182.24 182.24 0 0 1 240.39 341.08A60 60 0 0 1 354.5 367A60 60 0 0 1 468.61 341.08A182.24 182.24 0 0 1 354.5 595Z"/>
<path d="M354.5 595A107.83 107.83 0 0 1 287.76 434.06A36 36 0 0 1 354.5 452.8A36 36 0 0 1 421.24 434.06A107.83 107.83 0 0 1 354.5 595Z"/>
<path d="M354.5 595A66.38 66.38 0 0 1 313.57 496.78A22 22 0 0 1 354.5 508A22 22 0 0 1 395.43 496.78A66.38 66.38 0 0 1 354.5 595Z"/>
</g>
<g fill="none" stroke="#b0b0b0" stroke-width="1">
<path d="M294.5 262V288M414.5 262V288M294.5 270.5H414.5"/>
<path d="M153 308.5H235.5L294.5 367.5"/>
<path d="M551 304.5H469.5L414.5 367.5"/>
<path d="M92 481.5H174L470.5 349.5"/>
<path d="M526 367.5H551M526 595.5H551M543.5 367.5V595.5"/>
</g>
<g fill="#a8a8a8">
<path d="M300 268.5H307V272.5H300Z M402 268.5H409V272.5H402Z"/>
<path d="M241 312L249 316L245 320Z"/>
<path d="M462 312L458 320L454 316Z"/>
<path d="M470.5 349.5L462 350.5L464 355Z"/>
<path d="M541.5 373H545.5V380H541.5Z M541.5 583H545.5V590H541.5Z"/>
</g>
<g fill="none" stroke="#e040e0" stroke-width="1.3" stroke-linejoin="miter">
<use href="#gR" x="166" y="277"/><use href="#g2" x="185.5" y="277"/><use href="#g5" x="205" y="277"/>
<use href="#gR" x="480.5" y="273"/><use href="#g2" x="500" y="273"/><use href="#g5" x="519.5" y="273"/>
<use href="#g5" x="336.5" y="239"/><use href="#g0" x="354.5" y="239"/>
<use href="#gR" x="104" y="450"/><use href="#g7" x="123" y="450"/><use href="#g5" x="142.5" y="450"/>
<g transform="translate(511.5 501.5) rotate(-90)"><use href="#g9" x="0" y="0"/><use href="#g5" x="19" y="0"/></g>
</g>
<g fill="none" stroke="#ffffff" stroke-width="1.3">
<path d="M778 320.5H898M838.5 320.5V548"/>
</g>
<g fill="none" stroke="#ffffff" stroke-width="1.2">
<path d="M52.5 667V706.5H92"/>
<path d="M52.5 656L48.5 667.5H57Z M52.5 656V667.5M50.5 662V667.5M54.5 662V667.5"/>
<path d="M102.5 706.5L92 702.5V711Z M92 706.5H102.5M97 704.5H92M97 708.5H92"/>
<path d="M48 638L53 643L58 638M53 643V648"/>
<path d="M112 701L121 711M121 701L112 711"/>
<path d="M1093 729.5H1163M1163.5 722.5H1170.5V730H1163.5Z M1169.5 654V722"/>
</g>
<g fill="#9a9a9a"><rect x="294" y="383.5" width="1.2" height="1.2"/><rect x="414" y="383.5" width="1.2" height="1.2"/></g>
<g fill="#808080">
<rect x="975" y="693" width="166" height="9"/>
</g>
<g fill="#000">
<rect x="976" y="694" width="22" height="3"/>
<rect x="998" y="698" width="47" height="3"/>
<rect x="1045" y="694" width="95" height="3"/>
</g>
<g fill="#868686" font-family="Liberation Sans" font-size="19">
<text x="988" y="689">10</text><text x="1130" y="689">70</text>
<text x="969" y="718.5">0</text><text x="1035" y="718.5">30</text>
</g>
</svg>

<div id="mtabs" class="a">
<svg class="a" style="left:0;top:0" width="1170" height="32" viewBox="1 731 1170 32">
<rect x="1" y="731" width="1170" height="32" fill="#efefef"/>
<path d="M1 731.5H1171" stroke="#d4d4d4"/>
<rect x="28.5" y="732.5" width="58" height="29" fill="#ededed" stroke="#a8a8a8"/>
<path d="M57.5 733V761" stroke="#a8a8a8"/>
<path d="M48 741V753L41 747Z" fill="#787878"/>
<path d="M68 741V753L75.5 747Z" fill="#787878"/>
<path d="M87 732.5L101.5 761.5H158.5L173 732.5Z" fill="#fdfdfd"/>
<path d="M87 732.5L101.5 761.5M158.5 761.5L173 732.5" stroke="#111" stroke-width="1.1" fill="none"/>
<path d="M1 762H1171" stroke="#fafafa"/>
</svg>
<div class="a" style="left:107px;top:4px;font-size:22px;color:#111;white-space:nowrap">模型</div>
</div>
<div class="a" style="left:1px;top:762px;width:1197px;height:6px;background:#d8d8d8;border-top:1px solid #f4f4f4"></div>
<div id="cmd" class="a">
 <div class="a" style="left:0;top:0;width:1193px;height:1px;background:#5a5a5a"></div>
 <div class="a cl" style="left:3px;top:2px">指定下一点<span class="m">:&nbsp;95</span></div>
 <div class="a cl" style="left:3px;top:18px">指定下一点<span class="m">&nbsp;</span>或<span class="m">[</span>退出<span class="m">(E)/</span>放弃<span class="m">(U)]:</span></div>
 <div class="a" style="left:0;top:33px;width:1193px;height:1px;background:#8a8a8a"></div>
 <div class="a" style="left:3px;top:35px;font-size:7px;color:#a0a0a0;white-space:nowrap;letter-spacing:0.5px">命令:</div>
 <svg class="a" style="left:1176px;top:4px" width="17" height="29" viewBox="0 0 17 29"><rect width="17" height="29" fill="#f0f0f0"/><path d="M5 8L8.5 4.5L12 8M5 20L8.5 23.5L12 20" fill="none" stroke="#555" stroke-width="1.6"/></svg>
 <svg class="a" style="left:1092px;top:35px" width="104" height="19" viewBox="0 0 104 19"><rect width="104" height="19" fill="#f3f3f3"/><rect x="0" y="0" width="71" height="19" fill="#f0f0f0"/><rect x="16" y="1" width="17" height="16" fill="#cdcdcd"/><path d="M10 6L7 9.5L10 13M61 6L64 9.5L61 13" fill="none" stroke="#555" stroke-width="1.6"/></svg>
</div>
<div id="status" class="a">
 <div class="a" style="left:0;top:0;width:1197px;height:1px;background:#fafafa"></div>
 <span class="st" style="left:3px;top:4px;width:343px;overflow:hidden;letter-spacing:0.2px">140714.297978,&nbsp; -8886.042058,&nbsp; 0.0000</span>
 <span class="st" style="left:351px">栅格</span>
 <div class="box" style="left:403px;width:52px"></div><span class="st" style="left:406px">正交</span>
 <span class="st" style="left:460px">极轴</span>
 <div class="box" style="left:511px;width:95px"></div><span class="st" style="left:513px">对象捕捉</span>
 <span class="st" style="left:609px">对象追踪</span>
 <span class="st" style="left:705px;letter-spacing:1.3px">DYN</span>
 <div class="box" style="left:760px;width:54px"></div><span class="st" style="left:763px">线宽</span>
 <span class="st" style="left:817px;color:#2828b8">提交软件问题或增加新功能</span>
 <div class="a" style="left:1079px;top:8px;width:114px;height:16px;background:#fafafa"></div>
 <svg class="a" style="left:1082px;top:9px" width="19" height="15" viewBox="0 0 19 15"><path d="M0.5 14L3.5 0H14.5L18 14Z" fill="#12a08e"/><path d="M0 14.5L15 3.5M8.5 0L11.5 14.5" stroke="#bff5ee" stroke-width="1.4"/></svg>
 <span class="a" style="left:1105px;top:8px;font-size:13.5px;color:#273246;white-space:nowrap;letter-spacing:0">CAD.MxCloud</span>
</div>
<div id="lborder" class="a"></div>
<div class="a" style="left:0;top:852px;width:1199px;height:1px;background:#8a8a8a"></div>
<div id="rborder" class="a"></div>
</body></html>
